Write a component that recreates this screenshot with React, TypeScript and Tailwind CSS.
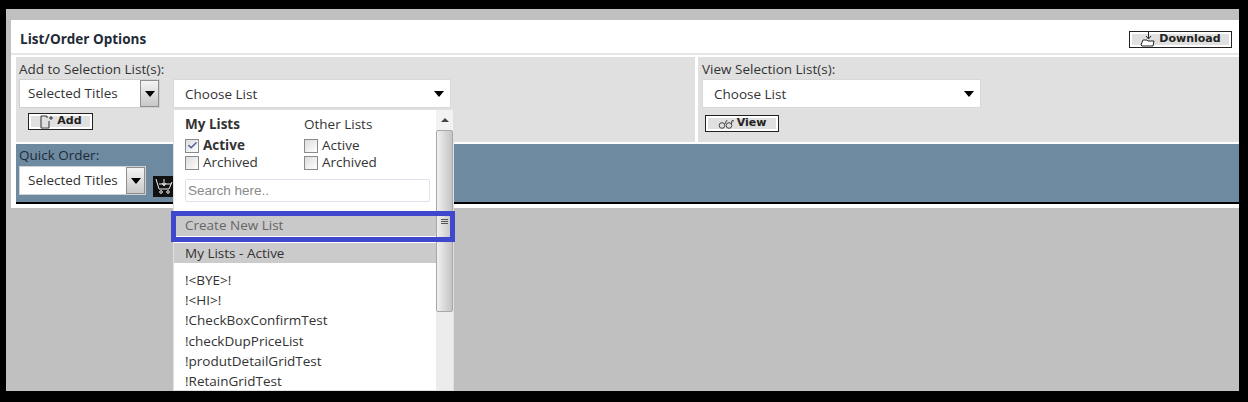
import { Check } from "lucide-react";

const font = "font-['Open_Sans',sans-serif]";
const lists = ["!<BYE>!", "!<HI>!", "!CheckBoxConfirmTest", "!checkDupPriceList", "!produtDetailGridTest", "!RetainGridTest"];

function Caret({ className = "" }: { className?: string }) {
  return <span className={`block h-0 w-0 border-x-[5px] border-t-[6px] border-x-transparent border-t-black ${className}`} />;
}

function TitleSelect({ width }: { width: string }) {
  return (
    <div className={`flex h-[29px] ${width} border border-[#d0d0d0] bg-white`}>
      <span className="flex-1 pl-[8px] text-[13.5px] leading-[27px] text-[#333]">Selected Titles</span>
      <span className="flex w-[19px] items-center justify-center border border-[#8f8f8f] bg-gradient-to-b from-[#f4f4f4] to-[#c8c8c8]">
        <Caret className="border-x-[4px] border-t-[4px]" />
      </span>
    </div>
  );
}

function ChooseList({ width }: { width: string }) {
  return (
    <div className={`flex h-[29px] ${width} items-center justify-between border border-[#d8d8d8] bg-white pl-[11px] pr-[6px]`}>
      <span className="pt-[2px] text-[13.5px] text-[#333]">Choose List</span>
      <Caret />
    </div>
  );
}

function ToolButton({ width, icon, label }: { width: string; icon: React.ReactNode; label: string }) {
  return (
    <div className={`h-[17px] ${width} border border-[#222] bg-white p-[2px]`}>
      <div className="flex h-full items-center justify-center gap-[2px] bg-[#e0e0e0] font-['DejaVu_Sans',sans-serif] text-[11px] font-bold text-[#222]">
        {icon}
        {label}
      </div>
    </div>
  );
}

function Box({ checked }: { checked?: boolean }) {
  return (
    <span className="flex h-[14px] w-[14px] items-center justify-center border border-[#8a8a8a] bg-gradient-to-br from-[#dcdcdc] to-white">
      {checked && <Check size={11} strokeWidth={3} className="text-[#4a5a9c]" />}
    </span>
  );
}

function CheckRow({ label, checked, bold }: { label: string; checked?: boolean; bold?: boolean }) {
  return (
    <div className="flex h-[17px] items-center gap-[4px]">
      <Box checked={checked} />
      <span className={`text-[13.5px] text-[#333] ${bold ? "font-bold" : ""}`}>{label}</span>
    </div>
  );
}

function ListPopup() {
  return (
    <div className="absolute left-[167px] top-[100px] flex h-[282px] w-[281px] overflow-hidden border border-[#e0e0e0] bg-white">
      <div className="w-[262px] shrink-0">
        <div className="pl-[11px] pr-[5px] pt-[4px]">
          <div className="flex text-[13.5px] text-[#333]">
            <div className="w-[119px]">
              <p className="h-[23px] font-bold leading-[20px]">My Lists</p>
              <CheckRow label="Active" checked bold />
              <CheckRow label="Archived" />
            </div>
            <div>
              <p className="h-[23px] leading-[20px]">Other Lists</p>
              <CheckRow label="Active" />
              <CheckRow label="Archived" />
            </div>
          </div>
          <div className="mt-[8px] h-[23px] w-[245px] rounded-[2px] border border-[#dde3ea] pl-[2px] font-['Liberation_Sans',sans-serif] text-[13.5px] leading-[21px] text-[#8a8a8a]">
            Search here..
          </div>
        </div>
        <div className="mt-[13px] h-[21px] bg-[#c9c9c9] pl-[11px] text-[13.5px] leading-[20px] text-[#666]">Create New List</div>
        <div className="mt-[7px] h-[20px] bg-[#cbcbcb] pl-[11px] text-[13.5px] leading-[20px] text-[#333]">My Lists - Active</div>
        <ul className="pl-[11px] pt-[7px] text-[13.5px] text-[#333]">
          {lists.map((name) => (
            <li key={name} className="h-[20.2px] leading-[20px]">{name}</li>
          ))}
        </ul>
      </div>
      <div className="flex w-[18px] flex-col bg-[#ececec]">
        <div className="flex h-[20px] items-center justify-center bg-[#f2f2f2]">
          <span className="block h-0 w-0 border-x-[4px] border-b-[4px] border-x-transparent border-b-[#444]" />
        </div>
        <div className="flex h-[182px] flex-col items-center justify-center gap-[1px] rounded-[2px] border border-[#a8a8a8] bg-gradient-to-r from-[#f0f0f0] to-[#c4c4c4]">
          <span className="h-px w-[7px] bg-[#555]" />
          <span className="h-px w-[7px] bg-[#555]" />
          <span className="h-px w-[7px] bg-[#555]" />
        </div>
      </div>
    </div>
  );
}

export default function App() {
  return (
    <div className={`h-[402px] w-[1248px] overflow-hidden bg-black pb-[11px] pl-[6px] pr-[9px] pt-[9px] ${font}`}>
      <div className="relative h-full bg-[#c0c0c0] pl-[5px] pt-[11px]">
        <div className="bg-white pb-[4px]">
          <div className="flex h-[35px] items-center justify-between border-b-2 border-[#e6e6e6] pl-[9px] pr-[7px] pt-[5px]">
            <span className="text-[13.5px] font-bold text-[#1f2a38]">List/Order Options</span>
            <ToolButton
              width="w-[103px]"
              label="Download"
              icon={
                <svg width="17" height="15" viewBox="0 0 17 15" fill="none" stroke="#222" strokeWidth="1">
                  <path d="M8.5 0v6M6 4l2.5 3L11 4" />
                  <path d="M1 13l2-5h4l1 1h6l-1 5H2z" fill="#fff" />
                </svg>
              }
            />
          </div>
          <div className="mt-[2px] flex h-[85px] gap-[3px] pl-[5px]">
            <div className="w-[679px] bg-[#e0e0e0] pl-[3px]">
              <p className="h-[22px] text-[13.5px] leading-[24px] text-[#333]">Add to Selection List(s):</p>
              <div className="flex gap-[13px]">
                <TitleSelect width="w-[141px]" />
                <ChooseList width="w-[278px]" />
              </div>
              <div className="ml-[9px] mt-[5px]">
                <ToolButton
                  width="w-[65px]"
                  label="Add"
                  icon={
                    <svg width="16" height="14" viewBox="0 0 16 14" fill="none" stroke="#333" strokeWidth="1">
                      <path d="M2 1h6v2M2 1v12h8V6" />
                      <path d="M12 1v4M10 3h4" />
                    </svg>
                  }
                />
              </div>
            </div>
            <div className="flex-1 bg-[#e0e0e0] pl-[4px]">
              <p className="h-[22px] text-[13.5px] leading-[24px] text-[#333]">View Selection List(s):</p>
              <ChooseList width="w-[279px]" />
              <div className="ml-[3px] mt-[7px]">
                <ToolButton
                  width="w-[74px]"
                  label="View"
                  icon={
                    <svg width="17" height="10" viewBox="0 0 17 10" fill="none" stroke="#444" strokeWidth="1">
                      <circle cx="4" cy="6.5" r="2.8" />
                      <circle cx="11" cy="6.5" r="2.8" />
                      <path d="M6.5 5.5L9 1M13.5 5L14 1.5l2 .5" />
                    </svg>
                  }
                />
              </div>
            </div>
          </div>
          <div className="ml-[5px] mt-[2px] h-[60px] border-b-2 border-black bg-[#6d8aa0] pl-[3px]">
            <p className="h-[22px] text-[13.5px] leading-[22px] text-[#1f2a38]">Quick Order:</p>
            <div className="flex items-start gap-[7px]">
              <TitleSelect width="w-[127px]" />
              <div className="mt-[10px] flex h-[21px] w-[24px] items-center justify-start bg-[#111] pl-[2px]">
                <svg width="18" height="17" viewBox="0 0 18 17" fill="none" stroke="#eee" strokeWidth="1">
                  <path d="M1 1l3 10h10l3-7" />
                  <path d="M4 6h12" />
                  <path d="M9 1v6M7 5l2 3 2-3" />
                  <circle cx="6" cy="14" r="1.3" />
                  <circle cx="13" cy="14" r="1.3" />
                </svg>
              </div>
            </div>
          </div>
        </div>
        <ListPopup />
        {/* blue highlight sits over the popup row */}
        <div className="absolute left-[165px] top-[202px] h-[31px] w-[284px] border-[5px] border-[#3f48cc]" />
      </div>
    </div>
  );
}
